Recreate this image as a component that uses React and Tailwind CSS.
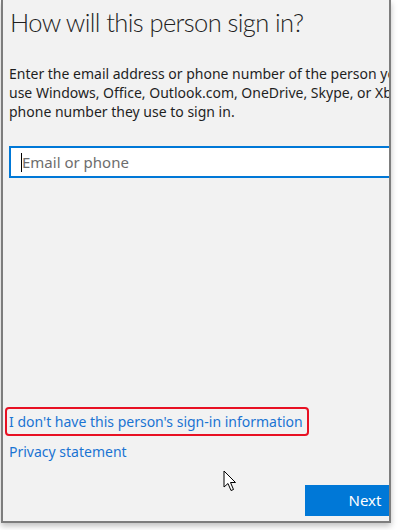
import React from "react";

const Cursor = () => (
  <svg width="14" height="22" viewBox="0 0 14 22" className="absolute left-[223px] top-[470px]">
    <path d="M1 1 L1 17 L5 13.5 L8 20.5 L10.5 19.5 L7.5 12.5 L12.5 12.5 Z" fill="#fff" stroke="#000" strokeWidth="1" strokeLinejoin="miter" />
  </svg>
);

const App = () => {
  return (
    <div className="relative w-[398px] h-[530px] bg-white overflow-hidden" style={{ fontFamily: '"Noto Sans", "Open Sans", sans-serif' }}>
      <div className="ml-px w-[390px] h-[523px] bg-[#f2f2f2] border-l-2 border-r-2 border-b-2 border-[#7d7d7d] overflow-hidden flex flex-col shadow-[0_3px_6px_rgba(0,0,0,0.25)]">
        <h1 className="pl-[7px] pt-[5px] text-[25.5px] leading-[34px] font-light tracking-[-0.6px] text-[#1f1f1f] whitespace-nowrap" style={{ fontFamily: 'Lato, "Noto Sans", sans-serif' }}>
          How will this person sign in?
        </h1>

        <div className="pl-[6px] mt-[25px] text-[14px] leading-[19px] text-[#1f1f1f] whitespace-nowrap">
          <div>Enter the email address or phone number of the person you want to add. If they</div>
          <div>use Windows, Office, Outlook.com, OneDrive, Skype, or Xbox, enter the email or</div>
          <div>phone number they use to sign in.</div>
        </div>

        <div className="ml-[6px] mt-[25px] w-[420px] h-[32px] bg-white border-2 border-[#0078d7] flex items-center pl-[10px]">
          <span className="w-px h-[19px] bg-black"></span>
          <span className="text-[15px] text-[#6d6d6d]">Email or phone</span>
        </div>

        <div className="flex-1"></div>

        <div className="ml-[2px] mr-auto rounded-[4px] border-2 border-[#e81123] pl-[2px] pr-[4px] h-[29px] flex items-center">
          <span className="text-[14px] text-[#1a74d2] whitespace-nowrap">I don't have this person's sign-in information</span>
        </div>

        <div className="pl-[6px] mt-[5px] text-[14px] leading-[22px] text-[#1a74d2]">Privacy statement</div>

        <div className="flex justify-end mt-[22px] mb-[5px] -mr-[36px]">
          <div className="w-[120px] h-[31px] bg-[#0078d7] text-white text-[15px] flex items-center justify-center">
            Next
          </div>
        </div>
      </div>
      <Cursor />
    </div>
  );
};

export default App;
